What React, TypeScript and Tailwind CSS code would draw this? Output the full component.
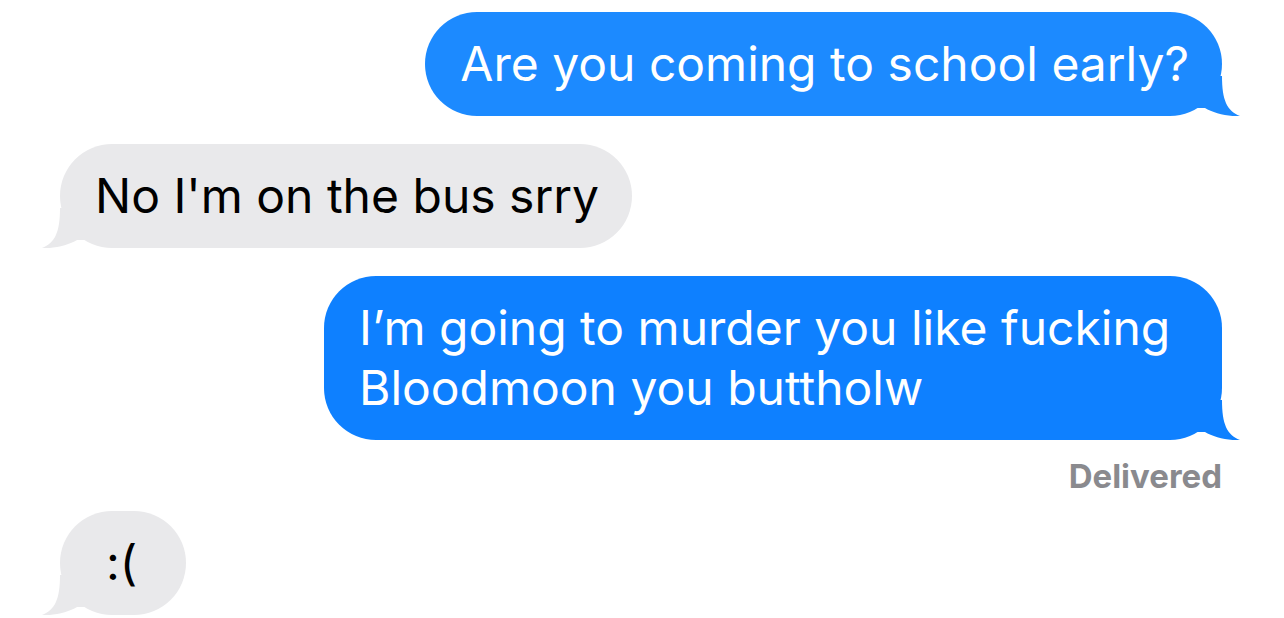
import React from 'react'

type Side = 'me' | 'them'

function Tail({ side, color }: { side: Side; color: string }) {
  // tail hangs off the bottom corner of the bubble
  const pos = side === 'me' ? 'right-[-18px]' : 'left-[-18px] -scale-x-100'
  return (
    <svg
      className={`absolute bottom-0 ${pos}`}
      width="58"
      height="40"
      viewBox="0 0 58 40"
    >
      <path d="M0 0 H40 C40 24 45 35 58 40 C47 41 31 37 23 32 L0 32 Z" fill={color} />
    </svg>
  )
}

function Bubble({
  side,
  color,
  children,
  className = '',
}: {
  side: Side
  color: string
  children: React.ReactNode
  className?: string
}) {
  const me = side === 'me'
  return (
    <div className={`flex ${me ? 'justify-end' : 'justify-start'}`}>
      <div
        className={`relative rounded-[52px] py-[22px] pl-[35px] pr-[33px] text-[48px] leading-[60px] whitespace-nowrap ${
          me ? 'text-white' : 'text-black'
        } ${className}`}
        style={{ backgroundColor: color }}
      >
        <div className="relative z-10">{children}</div>
        <Tail side={side} color={color} />
      </div>
    </div>
  )
}

export default function App() {
  return (
    <div
      className="min-h-[618px] w-[1284px] overflow-hidden bg-white pt-[12px] pl-[60px] pr-[62px]"
      style={{ fontFamily: 'Inter, "Liberation Sans", sans-serif' }}
    >
      <div className="flex flex-col gap-[28px]">
        <Bubble side="me" color="#1c8aff">
          Are you coming to school early?
        </Bubble>
        <Bubble side="them" color="#e9e9eb">
          No I'm on the bus srry
        </Bubble>
        <Bubble side="me" color="#0e80ff" className="w-[898px]">
          I’m going to murder you like fucking
          <br />
          Bloodmoon you buttholw
        </Bubble>
      </div>
      <div className="mt-[17px] mb-[16px] text-right text-[33px] leading-[38px] font-bold text-[#8a8a8e]">
        Delivered
      </div>
      <Bubble side="them" color="#e9e9eb" className="w-[126px] pl-[46px]">
        :(
      </Bubble>
    </div>
  )
}
